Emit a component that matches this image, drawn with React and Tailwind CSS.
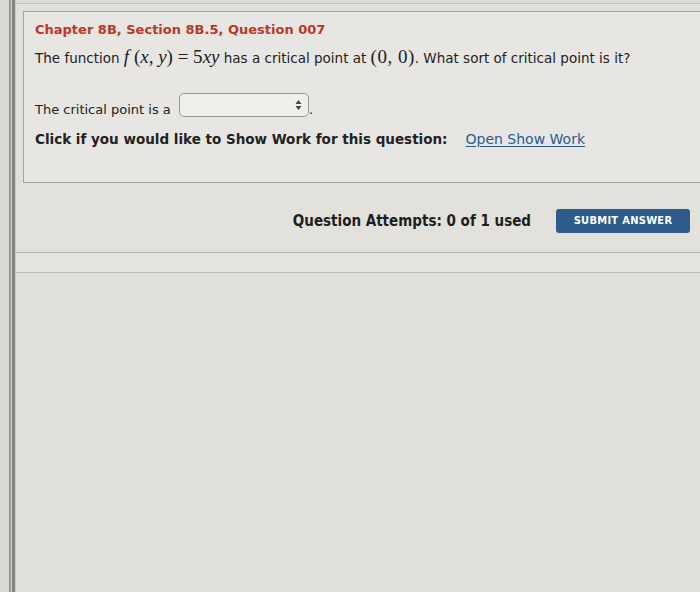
import React from "react";

const verdana = { fontFamily: '"DejaVu Sans", Verdana, sans-serif' };
const condensed = { fontFamily: '"DejaVu Sans Condensed", "DejaVu Sans", sans-serif', fontStretch: "condensed" };
const math = { fontFamily: '"Liberation Serif", "DejaVu Serif", serif' };

export default function App() {
    return (
        <div className="w-[700px] h-[592px] overflow-hidden flex bg-[#e2e1dc] text-[#222]" style={verdana}>
            {/* left frame edge */}
            <div className="w-[9px] bg-[#d9d9d6]" />
            <div className="w-[2px] bg-[#9c9c9a]" />
            <div className="w-[1px] bg-[#d0d0cd]" />
            <div className="w-[3px] bg-[#858583]" />
            <div className="w-[1px] bg-[#c8c8c5]" />

            <div className="flex-1 flex flex-col">
                <div className="h-[4px] border-b border-[#c2c2bf] bg-[#dcdcd8]" />

                {/* question panel */}
                <div className="ml-[7px] mt-[7px] h-[172px] border border-r-0 border-[#a3a3a0] bg-[#e7e6e2] pl-[11px] pt-[8px]">
                    <div className="text-[13px] font-bold text-[#b8392a] leading-[20px]">
                        Chapter 8B, Section 8B.5, Question 007
                    </div>
                    <div className="text-[13.5px] leading-[22px] mt-[6px] flex items-baseline whitespace-nowrap">
                        <span>The function&nbsp;</span>
                        <span className="text-[19px]" style={math}>
                            <i>f</i> (<i>x</i>, <i>y</i>) = 5<i>xy</i>
                        </span>
                        <span>&nbsp;has a critical point at&nbsp;</span>
                        <span className="text-[19px] tracking-[0.5px]" style={math}>(0, 0)</span>
                        <span>. What sort of critical point is it?</span>
                    </div>
                    <div className="mt-[28px] flex items-center text-[13px] h-[26px]">
                        <span>The critical point is a&nbsp;&nbsp;</span>
                        <div className="w-[130px] h-[24px] mb-[11px] rounded-[5px] border border-[#9a9a98] bg-[#eeeeeb] flex items-center justify-end pr-[6px]">
                            <svg width="7" height="12" viewBox="0 0 7 12">
                                <path d="M3.5 1 L6.5 5 L0.5 5 Z" fill="#444" />
                                <path d="M3.5 11 L6.5 7 L0.5 7 Z" fill="#444" />
                            </svg>
                        </div>
                        <span className="self-end leading-[26px]">.</span>
                    </div>
                    <div className="mt-[5px] flex items-center leading-[22px]">
                        <span className="text-[13.5px] font-bold">Click if you would like to Show Work for this question:</span>
                        <span className="ml-[18px] text-[14px] text-[#2a5d91] underline underline-offset-2">Open Show Work</span>
                    </div>
                </div>

                {/* attempts row */}
                <div className="h-[69px] flex items-center justify-end pr-[10px] pt-[7px]">
                    <span className="text-[15px] font-bold text-[#1e1e1e] mr-[25px]" style={condensed}>
                        Question Attempts: 0 of 1 used
                    </span>
                    <button className="w-[134px] h-[24px] rounded-[3px] bg-[#2c5b8c] text-white text-[11px] font-bold tracking-[0.3px]" style={condensed}>
                        SUBMIT ANSWER
                    </button>
                </div>

                <div className="h-[1px] bg-[#b4b4b1]" />
                <div className="h-[19px] bg-[#e4e3df]" />
                <div className="h-[1px] bg-[#bdbdba]" />
                <div className="flex-1 bg-[#e0dfda]" />
            </div>
        </div>
    );
}
